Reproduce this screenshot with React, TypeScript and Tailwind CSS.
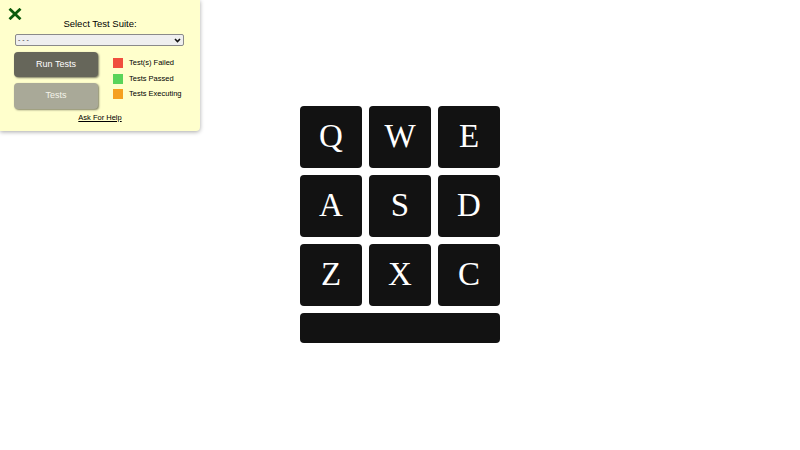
import React from "react";

const keys = ["Q", "W", "E", "A", "S", "D", "Z", "X", "C"];

export default function App() {
  return (
    <div className="relative w-[800px] h-[450px] bg-white overflow-hidden" style={{ fontFamily: '"Liberation Sans", Arial, sans-serif' }}>
      <div className="absolute left-0 top-0 w-[200px] h-[131px] bg-[#ffffcc] rounded-br-[4px] shadow-[0_1px_4px_rgba(0,0,0,0.35)] flex flex-col">
        <div className="absolute left-[8px] top-[8px]">
          <svg width="14" height="12" viewBox="0 0 14 12">
            <path d="M1.5 0.8 L12.5 11.2 M12.5 0.8 L1.5 11.2" stroke="#0b5a0b" strokeWidth="2.8" strokeLinecap="butt" />
          </svg>
        </div>
        <div className="pt-[18px] text-[9.5px] leading-[11px] text-black text-center">Select Test Suite:</div>
        <div className="mt-[5px] pl-[15px] pr-[16px]">
          <div className="h-[12px] bg-[#efefef] border border-[#8a8a8a] rounded-[2px] flex items-center justify-between px-[2px]">
            <span className="text-[7px] leading-[8px] text-[#333]">- - -</span>
            <svg width="7" height="5" viewBox="0 0 7 5"><path d="M1 1 L3.5 3.5 L6 1" stroke="#111" strokeWidth="1.6" fill="none" /></svg>
          </div>
        </div>
        <div className="flex mt-[6px] pl-[14px]">
          <div className="flex flex-col gap-[6px]">
            <div className="w-[84px] h-[25px] rounded-[4px] bg-[#66665a] text-white text-[9px] flex items-center justify-center shadow-[1px_1px_2px_rgba(0,0,0,0.5)]">Run Tests</div>
            <div className="w-[84px] h-[26px] rounded-[4px] bg-[#a9a998] text-[#f4f4ea] text-[9px] flex items-center justify-center shadow-[1px_1px_2px_rgba(0,0,0,0.5)]">Tests</div>
          </div>
          <div className="flex flex-col gap-[5.5px] ml-[15px] mt-[6px]">
            {[
              ["#f04e3e", "Test(s) Failed"],
              ["#5ad45a", "Tests Passed"],
              ["#f5a020", "Tests Executing"],
            ].map(([c, t]) => (
              <div key={t} className="flex items-center h-[10px]">
                <div className="w-[10px] h-[10px]" style={{ backgroundColor: c }} />
                <span className="ml-[6px] text-[7.5px] leading-[10px] text-black">{t}</span>
              </div>
            ))}
          </div>
        </div>
        <div className="mt-[4px] text-center text-[7.5px] leading-[9px] underline text-black">Ask For Help</div>
      </div>

      <div className="w-full h-full flex items-center justify-center">
        <div className="flex flex-col gap-[7px] w-[200px] pb-[1px]">
          <div className="grid grid-cols-3 gap-[7px]">
            {keys.map((k) => (
              <div key={k} className="h-[62px] rounded-[4px] bg-[#121212] text-white flex items-center justify-center text-[33px]" style={{ fontFamily: '"Liberation Serif", "Times New Roman", serif' }}>
                {k}
              </div>
            ))}
          </div>
          <div className="h-[30px] rounded-[4px] bg-[#121212]" />
        </div>
      </div>
    </div>
  );
}
